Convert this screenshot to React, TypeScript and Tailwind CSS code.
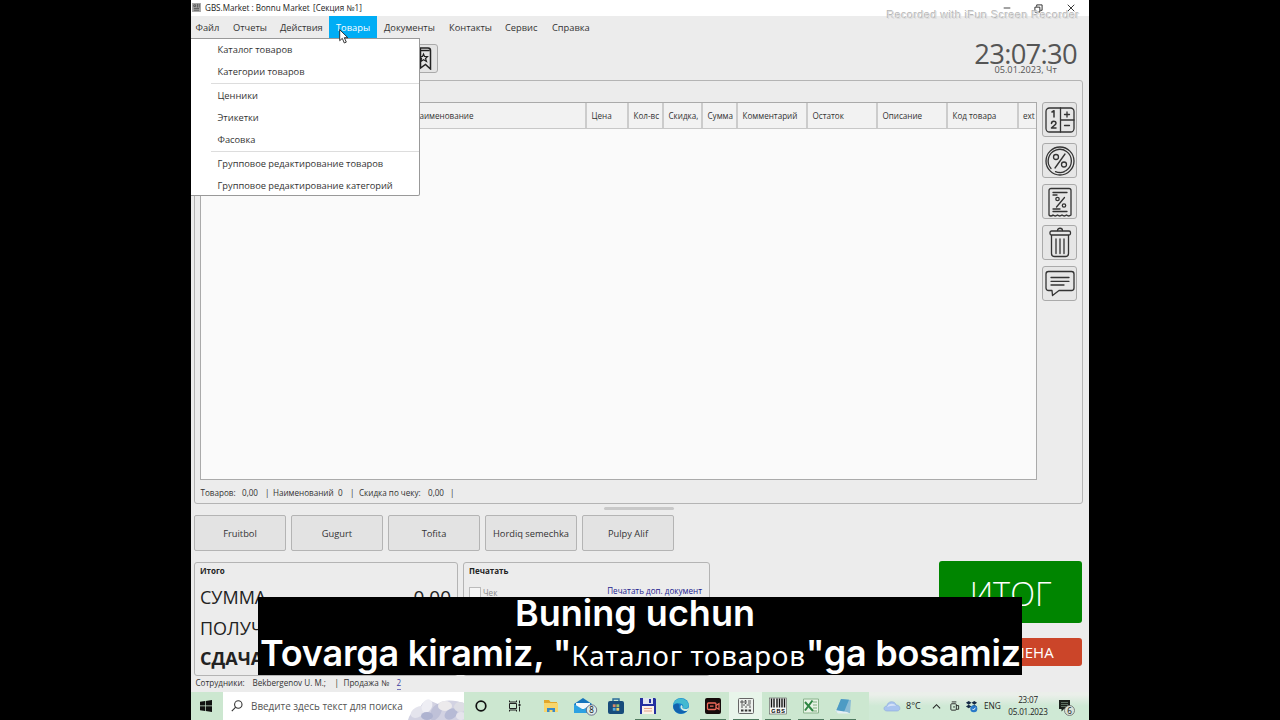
import React from 'react';
import { Minus, X } from 'lucide-react';

const menuItems = [
    { label: 'Файл', box: 'w-[35px] pl-[4.500px]' },
    { label: 'Отчеты', box: 'w-[47px] pl-[7px]' },
    { label: 'Действия', box: 'w-[56px] pl-[7px]' },
    { label: 'Товары', box: 'w-[48px] pl-[7px] bg-[#00adf5] text-white' },
    { label: 'Документы', box: 'w-[65px] pl-[7px]' },
    { label: 'Контакты', box: 'w-[56px] pl-[7px]' },
    { label: 'Сервис', box: 'w-[47px] pl-[7px]' },
    { label: 'Справка', box: 'w-[60px] pl-[7px]' },
];

const dropdownGroups = [
    ['Каталог товаров', 'Категории товаров'],
    ['Ценники', 'Этикетки', 'Фасовка'],
    ['Групповое редактирование товаров', 'Групповое редактирование категорий'],
];

const columns = [
    { label: '', width: 'w-[208px]' },
    { label: 'Наименование', width: 'w-[178px]' },
    { label: 'Цена', width: 'w-[42px]' },
    { label: 'Кол-вс', width: 'w-[35px]' },
    { label: 'Скидка,', width: 'w-[39px]' },
    { label: 'Сумма', width: 'w-[35px]' },
    { label: 'Комментарий', width: 'w-[70px]' },
    { label: 'Остаток', width: 'w-[70px]' },
    { label: 'Описание', width: 'w-[70px]' },
    { label: 'Код товара', width: 'w-[71px]' },
];

const products = ['Fruitbol', 'Gugurt', 'Tofita', 'Hordiq semechka', 'Pulpy Alif'];

const Stroke = ({ children }: { children: React.ReactNode }) => (
    <svg viewBox="0 0 32 32" className="size-8" fill="none" stroke="#333" strokeWidth="1.300" strokeLinecap="round" strokeLinejoin="round">
        {children}
    </svg>
);

const sideIcons = [
    <Stroke key="calc">
        <rect x="2" y="4" width="28" height="24" rx="3.500" />
        <path d="M16.500 4v24M16.500 16H30M20.500 10.500h5M23 8v5M20.500 21.500h5" />
        <path d="M8 8l2-1.300v6.300M7.500 19.500c0-3 4.500-3 4.500-.3 0 1.500-2.500 2.500-4.500 4.800h4.500" strokeWidth="1.500" />
    </Stroke>,
    <Stroke key="percent">
        <circle cx="16" cy="16" r="14" />
        <path d="M7 23.500a11.600 11.600 0 1 1 4.500 3.200M15 27.500a11.600 11.600 0 0 0 5-.600M21 9L11 23" />
        <circle cx="12" cy="12" r="2.500" />
        <circle cx="20" cy="19.500" r="2.500" />
    </Stroke>,
    <Stroke key="receipt">
        <path d="M5 29V4.500c0-1.500 1-2 2-2h18c1.500 0 2 1 2 2V29c-1.500 1.300-3 1.300-4.500 0-1.500 1.300-3 1.300-4.500 0-1.500 1.300-3 1.300-4.500 0-1.500 1.300-3 1.300-4.500 0-1.200 1.300-3 1.300-4 0zM9 6.500h14M9 9h4M9 23h7M9 25.500h14M20.500 11.500l-8 9.500" />
        <circle cx="13.500" cy="13" r="1.700" />
        <circle cx="20" cy="19.500" r="1.700" />
    </Stroke>,
    <Stroke key="trash">
        <path d="M7.500 8.500v18c0 2 1 3 3 3h11c2 0 3-1 3-3v-18M13.500 3.500c0-3 5-3 5 0M12 12v14.500M16 12v14.500M20 12v14.500" />
        <rect x="6" y="4" width="20.500" height="4" rx="1.500" />
    </Stroke>,
    <Stroke key="comment">
        <path d="M4.500 3.500h23c1.500 0 2.500 1 2.500 2.500v14c0 1.500-1 2.500-2.500 2.500H15L8.500 27.500l-.500-5H4.500C3 22.500 2 21.500 2 20V6c0-1.500 1-2.500 2.500-2.500zM7 9.500h18M7 13.300h18M7 17h13" />
    </Stroke>,
];

const GbsIcon = () => (
    <svg viewBox="0 0 16 16" className="size-4">
        <rect x=".5" y=".5" width="15" height="15" rx="1" fill="#eef2ee" stroke="#666" />
        <path d="M3 3h2v2H3zM7 2.500h1v3H7zM10 3h3M10 5h3M3 7h4M8.500 7h4M3 9h2M7 9h2M11 9h2" fill="none" stroke="#444" strokeWidth=".9" />
        <path d="M3 12.500h2.500M6.800 12.500h2.500M10.500 12.500H13" stroke="#333" strokeWidth="2" />
    </svg>
);

const taskIcons = [
    {
        icon: <svg viewBox="0 0 18 18" className="size-[18px]"><circle cx="9" cy="9" r="4.800" fill="none" stroke="#111" strokeWidth="1.700" /></svg>,
    },
    {
        icon: (
            <svg viewBox="0 0 18 18" className="size-[18px] translate-x-0.5" fill="none" stroke="#222">
                <path d="M3.500 3.500v1.500h7v-1.500M3.500 14.500v-1.500h7v1.500M3.500 6.500h7v5h-7zM13.500 3.500v3M13.500 9.500v5" />
                <path d="M13.500 7v2" strokeWidth="2" />
            </svg>
        ),
    },
    {
        offset: true,
        icon: (
            <svg viewBox="0 0 18 18" className="size-[18px]">
                <path d="M2 3h5l1.500 2H15v10H2z" fill="#e2a72b" />
                <path d="M2 6h14v9H2z" fill="#f8d66c" />
                <path d="M5 15v-4h8v4h-2.500v-2h-3v2z" fill="#3989c9" />
            </svg>
        ),
    },
    {
        icon: (
            <svg viewBox="0 0 26 20" className="h-5 w-[26px] translate-x-0.5">
                <path d="M2 8l9-6 9 6v9H2z" fill="#1674bd" />
                <path d="M4 7h14v6H4z" fill="#f3f8fb" />
                <path d="M2 8l9 5.500L20 8v9H2z" fill="#2da2e2" />
                <circle cx="19.500" cy="14" r="5.200" fill="#dcebea" stroke="#557" strokeWidth=".8" />
                <text x="19.500" y="17" textAnchor="middle" fontSize="8" fontFamily="Noto Sans" fill="#222">8</text>
            </svg>
        ),
    },
    {
        icon: (
            <svg viewBox="0 0 18 18" className="size-[18px]">
                <path d="M6 5V2h6v3" fill="none" stroke="#2b6e9a" strokeWidth="1.400" />
                <rect x="1" y="4" width="16" height="13" rx="2" fill="#174c7b" />
                <path d="M5.800 7.300h2.800v2.800H5.800z" fill="#d98a6b" /><path d="M9.400 7.300h2.800v2.800H9.400z" fill="#9cc06d" />
                <path d="M5.800 10.900h2.800v2.800H5.800z" fill="#58aedb" /><path d="M9.400 10.900h2.800v2.800H9.400z" fill="#ecd06c" />
            </svg>
        ),
    },
    {
        active: true,
        icon: (
            <svg viewBox="0 0 18 18" className="size-[18px]">
                <path d="M1 1h15l1 1v15H1z" fill="#2330a0" />
                <path d="M4 1h10v6H4z" fill="#dfe4ef" /><path d="M10 2h2v4h-2z" fill="#2330a0" />
                <path d="M3 9h12v8H3z" fill="#fbf1e7" /><path d="M5 11.500h8M5 14h8" stroke="#e2a28b" />
            </svg>
        ),
    },
    {
        icon: (
            <svg viewBox="0 0 18 18" className="size-[18px]">
                <circle cx="9" cy="9" r="8" fill="#1685cf" />
                <path d="M1.200 8C2.500-.5 14-.5 16.500 7c1 4-3 5.500-6 4.200 2-2.200 0-4.700-2.500-4.700C4.500 6 2 7 1.200 8z" fill="#43b9d0" />
                <path d="M7.500 8C6 12 10 15 15.500 13.500 11 19 1 16.500 1.200 9 3 6 6 5.500 7.500 8z" fill="#1263ae" />
                <path d="M9.500 12.200c-1.500-1.200-1.200-3.500 0-4.200 1.200.8 1.300 2 .8 3 2 1.500 5 1.300 6.700-.5-.3 1.500-.8 2.500-1.700 3.200-2 .6-4.300.2-5.800-1.500z" fill="#d7ede0" />
            </svg>
        ),
    },
    {
        active: true,
        icon: (
            <svg viewBox="0 0 18 18" className="size-[18px]">
                <rect x="1" y="1" width="16" height="16" rx="2" fill="#160b0b" />
                <rect x="3.500" y="6" width="8.500" height="6.500" rx="1" fill="none" stroke="#ee6a5b" strokeWidth="1.300" />
                <path d="M12 8.500l3-2v6l-3-2M6 9.200h3.500" stroke="#ee6a5b" fill="none" strokeWidth="1.200" />
            </svg>
        ),
    },
    { active: true, selected: true, icon: <GbsIcon /> },
    {
        active: true,
        icon: (
            <svg viewBox="0 0 18 18" className="size-[18px]">
                <rect x=".5" y="1" width="17" height="16" fill="#f5f7f5" stroke="#555" strokeWidth=".6" />
                <path d="M2.500 1.500v9M5 1.500v9M8 1.500v9M10.500 1.500v9M13 1.500v9M15.500 1.500v9" stroke="#111" strokeWidth="1.400" />
                <text x="9.500" y="16.300" textAnchor="middle" fontSize="5.500" fontWeight="700" fontFamily="Liberation Sans" letterSpacing=".8">GBS</text>
            </svg>
        ),
    },
    {
        active: true,
        icon: (
            <svg viewBox="0 0 18 18" className="size-[18px]">
                <path d="M1.500 2h15v14h-15z" fill="#e8f3e6" stroke="#8ab38c" />
                <path d="M11 5h4M11 8h4M11 11h4M11 14h4" stroke="#7eae7e" />
                <path d="M3 5l8 9M10.500 3.500L3 13.500" stroke="#2f8543" strokeWidth="2" />
            </svg>
        ),
    },
    {
        active: true,
        icon: (
            <svg viewBox="0 0 18 18" className="size-[18px]">
                <path d="M7 2l10 1-1 13-14-1z" fill="#8bbcd5" />
                <path d="M7 2l8 .8L10 15l-8-1z" fill="#4d9bc4" /><path d="M1 13l12 2 3 1.500H4z" fill="#e4eff3" />
            </svg>
        ),
    },
];

const Header = () => (
    <>
        <div className="flex h-4 items-center justify-between bg-white">
            <div className="flex items-center pl-px text-[8.100px] text-[#222]">
                <svg viewBox="0 0 10 10" className="size-[9px]">
                    <rect width="10" height="10" fill="#aaa" />
                    <path d="M2 2h2v2H2zM6 1v4M8 1v4M2 6h6M2 8h6" stroke="#555" fill="none" />
                </svg>
                <span className="w-[108px] whitespace-nowrap pl-[4px]">GBS.Market : Bonnu Market</span>
                <span className="pl-[4px]">[Секция №1]</span>
            </div>
            <div className="flex items-center pr-[12px] text-[#222]">
                <Minus size={10} strokeWidth={2} />
                <svg viewBox="0 0 10 10" className="ml-[22px] size-[9px]" fill="none" stroke="currentColor">
                    <path d="M1 3.500h5.500V9H1zM3 3V1h6v6H7" />
                </svg>
                <X size={12} strokeWidth={1.800} className="ml-[22px]" />
            </div>
        </div>
        <div className="flex h-[22px] text-[9.3px] leading-[23px] text-[#333]">
            {menuItems.map((item) => (
                <div key={item.label} className={`whitespace-nowrap ${item.box}`}>{item.label}</div>
            ))}
        </div>
        <div className="flex h-[42px] justify-between">
            <div className="ml-[218px] mt-[6px] flex size-[29px] justify-center rounded-[3px] border border-[#aaa] bg-[#e4e4e4] pr-1 pt-px">
                <svg viewBox="0 0 24 24" className="size-6 shrink-0" fill="none" stroke="#222" strokeWidth="1.500">
                    <path d="M3 2h15c2 0 2.500 1 2.500 2.500V23l-5-4.500-5 3.500V4c0-1.500-1-2-2-2M10.500 4.500h9" />
                    <path d="M13.500 8l1 2.500h3l-2 2 1 3-3-1.700-2.700 1.700.7-3-2-2h3z" strokeWidth="1.200" />
                </svg>
            </div>
            <div className="mr-[12px] flex flex-col items-center pt-[1px] text-[#555]">
                <div className="text-[27.4px] leading-[30px] tracking-[-0.7px]">23:07:30</div>
                <div className="-mt-[5px] text-[9.200px] leading-[11px]">05.01.2023, Чт</div>
            </div>
        </div>
    </>
);

const DropdownMenu = () => (
    <div className="absolute left-0 top-[38px] z-10 h-[158px] w-[229px] rounded-br-[2px] border border-l-0 border-[#999] bg-white text-[9.3px] text-[#333]">
        {dropdownGroups.map((group, idx) => (
            <div key={idx}>
                {idx > 0 && <div className="ml-[20px] h-0.5 border-t border-[#ddd]" />}
                {group.map((label) => (
                    <div key={label} className="h-[22px] whitespace-nowrap pl-[26.500px] leading-[22px]">{label}</div>
                ))}
            </div>
        ))}
    </div>
);

const SaleTable = () => (
    <div className="ml-[3px] flex h-[424px] w-[889px] flex-col rounded-[3px] border border-[#b4b4b4]">
        <div className="flex pl-[5px] pt-[21px]">
            <div className="h-[378px] w-[837px] overflow-hidden border border-[#aaa] bg-[#fafafa]">
                <div className="flex h-[26px] border-b border-[#c8c8c8] bg-[#f2f2f2] text-[8.1px] leading-[26px] text-[#333]">
                    {columns.map((col, idx) => (
                        <div key={idx} className={`shrink-0 overflow-hidden whitespace-nowrap border-r-2 border-[#ccc] pl-[4.500px] ${col.width}`}>{col.label}</div>
                    ))}
                    <div className="pl-[4px]">ext</div>
                </div>
            </div>
            <div className="ml-[5px] flex flex-col gap-[6px]">
                {sideIcons.map((icon, idx) => (
                    <div key={idx} className="flex size-[35px] items-center justify-center rounded-[3px] border border-[#aaa] bg-[#e6e6e6]">{icon}</div>
                ))}
            </div>
        </div>
        <div className="flex whitespace-nowrap pl-[5.500px] text-[8.1px] leading-[25px] text-[#333]">
            <span className="w-[41.500px]">Товаров:</span>
            <span className="w-[23px]">0,00</span>
            <span className="w-[8px]">|</span>
            <span className="w-[65px]">Наименований</span>
            <span className="w-[12px]">0</span>
            <span className="w-[9px]">|</span>
            <span className="w-[69px]">Скидка по чеку:</span>
            <span className="w-[22px]">0,00</span>
            <span>|</span>
        </div>
    </div>
);

const Checkout = () => (
    <div className="flex h-[114px] pl-[3px]">
        <div className="w-[264px] rounded-[3px] border border-[#b4b4b4] px-[5px] text-[#222]">
            <div className="h-[17px] text-[8px] font-bold leading-[16px]">Итого</div>
            <div className="flex h-[34px] justify-between leading-[35px]">
                <span className="text-[18px]">СУММА</span>
                <span className="pr-[1px] text-[19px]">0,00</span>
            </div>
            <div className="h-[28px] text-[18px] leading-[28px]">ПОЛУЧЕНО</div>
            <div className="text-[18px] font-bold leading-[33px]">СДАЧА</div>
        </div>
        <div className="ml-[5px] w-[247px] rounded-[3px] border border-[#b4b4b4] px-[5px]">
            <div className="h-[17px] text-[8px] font-bold leading-[16px] text-[#222]">Печатать</div>
            <div className="flex pt-[7px] text-[8.100px] leading-[12px]">
                <span className="size-[12px] border border-[#bbb] bg-[#f5f5f5]" />
                <span className="pl-[2px] text-[#888]">Чек</span>
                <span className="-mt-[2px] ml-auto pr-[2px] leading-[11px] text-[#23238e]">Печатать доп. документ</span>
            </div>
        </div>
        <div className="ml-auto mr-[7px] -mt-px w-[143px] text-center text-white">
            <div className="h-[62px] rounded-[3px] bg-[#008500] text-[32.500px] font-light leading-[65px]">ИТОГ</div>
            <div className="mt-[15px] h-[28px] rounded-[3px] bg-[#cb4529] pl-[24px] text-[15px] leading-[28px]">ОТМЕНА</div>
        </div>
    </div>
);

const Taskbar = () => (
    <div className="flex h-[28px] items-center overflow-hidden bg-[#cce7d0] text-[#222]">
        <div className="flex w-[32px] shrink-0 justify-center pr-[3px]">
            <svg viewBox="0 0 12 12" className="size-3 text-[#111]" fill="currentColor">
                <path d="M0 1.700l5-.7v4.600H0zM5.700.9L12 0v5.600H5.700zM0 6.300h5V11l-5-.7zM5.700 6.300H12V12l-6.300-.9z" />
            </svg>
        </div>
        <div className="flex h-full w-[241px] shrink-0 items-center bg-white">
            <svg viewBox="0 0 12 12" className="ml-[8px] size-3" fill="none" stroke="#333" strokeWidth="1.100">
                <circle cx="7.300" cy="4.500" r="3.700" />
                <path d="M4.700 7.200L.8 11.200" />
            </svg>
            <span className="whitespace-nowrap pl-[8px] text-[9.900px] text-[#555]">Введите здесь текст для поиска</span>
            <svg viewBox="0 0 56 28" className="ml-auto h-7 w-14 shrink-0">
                <path d="M0 28c2-10 12-10 14-16 5-6 11-2 16 0 7-6 19-3 26-1v17z" fill="#d2d2e2" />
                <ellipse cx="10" cy="20" rx="8" ry="5" fill="#e4e4ed" transform="rotate(-30 10 20)" />
                <ellipse cx="19" cy="14" rx="5" ry="7" fill="#eeeef4" transform="rotate(25 19 14)" />
                <ellipse cx="28" cy="20" rx="5" ry="9" fill="#bfc1d8" transform="rotate(28 28 20)" />
                <ellipse cx="37" cy="14" rx="7" ry="5" fill="#eceaec" />
                <ellipse cx="43" cy="22" rx="7" ry="5" fill="#b6bad5" transform="rotate(-35 43 22)" />
                <ellipse cx="52" cy="15" rx="6" ry="5" fill="#dddde4" />
                <ellipse cx="19" cy="24" rx="6" ry="4" fill="#aeb3d0" />
                <ellipse cx="53" cy="24" rx="5" ry="4" fill="#e5e4ec" />
            </svg>
        </div>
        <div className="flex h-full shrink-0">
            {taskIcons.map((item, idx) => (
                <div key={idx} className={`-mr-[0.500px] flex h-full w-[33px] shrink-0 flex-col items-center ${item.selected ? 'bg-[#e8f5ea]' : ''} ${item.offset ? 'ml-[5px]' : ''}`}>
                    <div className="flex h-[27px] items-center">{item.icon}</div>
                    {item.active && <div className="h-px w-[26px] bg-[#4f7a5f]" />}
                </div>
            ))}
        </div>
        <div className="ml-[10px] flex h-full flex-1 items-center bg-linear-to-b from-[#ebefea] from-10% to-[#cfe9d5] to-50% text-[9px]">
            <svg viewBox="0 0 18 14" className="ml-[14px] h-3.5 w-[18px] shrink-0">
                <path d="M4 12C0 12 0 7 4 7c0-5 8-6 9-1 5 0 5 6 1 6z" fill="#a9c4ef" stroke="#8aa9dc" strokeWidth=".6" />
                <path d="M4 8c2-4 7-4 9-1-3-.5-6 0-9 1z" fill="#d5e2f8" />
            </svg>
            <span className="w-[31px] shrink-0 whitespace-nowrap pl-[5px]">8°C</span>
            <svg viewBox="0 0 10 10" className="size-[9px] shrink-0" fill="none" stroke="#222" strokeWidth="1.200"><path d="M1 7l4-4 4 4" /></svg>
            <svg viewBox="0 0 12 12" className="ml-[8px] size-[11px] shrink-0" fill="none" stroke="#222">
                <rect x="2" y="3" width="6" height="7" rx="1" /><path d="M8 5h2.500v4H8M3 1h5M4.500 6.500h2" />
            </svg>
            <svg viewBox="0 0 14 14" className="ml-[5px] size-[13px] shrink-0">
                <path d="M4 1l3 2-3 2-3-2zM10 1l3 2-3 2-3-2zM4 5l3 2-3 2-3-2zM10 5l3 2-3 2-3-2z" fill="#152a45" />
                <circle cx="9.500" cy="9.500" r="3.800" fill="#2878c8" />
                <path d="M8 9.500l1.200 1.300 2-2.500" stroke="#fff" fill="none" />
            </svg>
            <span className="ml-[6px] w-[22px] shrink-0 text-[8.300px]">ENG</span>
            <div className="w-[44px] shrink-0 whitespace-nowrap text-center text-[8.100px] leading-[12.500px] tracking-[-0.200px]">
                <div>23:07</div>
                <div>05.01.2023</div>
            </div>
            <svg viewBox="0 0 18 18" className="ml-[8px] mt-[3px] size-[18px] shrink-0">
                <path d="M1 1h11v9H6l-2.500 2.500V10H1z" fill="#1b211c" />
                <path d="M3 3.500h7M3 5.500h7M3 7.500h5" stroke="#789080" strokeWidth=".7" />
                <circle cx="11.500" cy="11.500" r="5" fill="#d8e3da" stroke="#666" strokeWidth=".8" />
                <text x="11.500" y="14.500" textAnchor="middle" fontSize="8" fontFamily="Noto Sans" fill="#222">6</text>
            </svg>
        </div>
    </div>
);

const Caption = () => (
    <div className="absolute left-[258px] top-[597px] z-20 h-[78px] w-[764px] bg-black font-['Inter',sans-serif] text-[36px] font-semibold text-white">
        <div className="-ml-[10px] h-[35px] whitespace-nowrap text-center leading-[32px]">Buning uchun</div>
        <div className="flex h-[43px] items-baseline whitespace-nowrap pl-[2px] leading-[42px] tracking-[-0.200px]">
            <span>Tovarga kiramiz, "</span>
            <span className="font-['Noto_Sans',sans-serif] text-[28px] font-normal tracking-[0.700px]">Каталог товаров</span>
            <span>"ga bosamiz</span>
        </div>
    </div>
);

const App = () => {
    return (
        <main className="relative h-[720px] w-[1280px] overflow-hidden bg-black font-['Open_Sans','Noto_Sans',sans-serif]">
            <div className="relative ml-[191px] flex h-full w-[898px] flex-col bg-[#ececec]">
                <Header />
                <SaleTable />
                <div className="ml-[413px] mt-[3px] h-[3px] w-[70px] rounded-full bg-[#c8c8c8]" />
                <div className="mt-[5px] flex gap-[5px] pl-[3px]">
                    {products.map((name) => (
                        <div key={name} className="h-[36px] w-[92px] whitespace-nowrap rounded-[2px] border border-[#b4b4b4] bg-[#e3e3e3] text-center text-[9.300px] leading-[36px] text-[#333]">{name}</div>
                    ))}
                </div>
                <div className="h-[11px]" />
                <Checkout />
                <div className="flex h-[16px] whitespace-nowrap pl-[4.500px] text-[8.100px] leading-[14px] text-[#333]">
                    <span className="w-[57px]">Сотрудники:</span>
                    <span className="w-[82px]">Bekbergenov U. M.;</span>
                    <span className="w-[9px]">|</span>
                    <span className="w-[53px]">Продажа №</span>
                    <span className="h-[14px] border-b border-[#7777bb] text-[#3c3ca0]">2</span>
                </div>
                <Taskbar />
                <DropdownMenu />
                <svg viewBox="0 0 10 15" className="absolute left-[148px] top-[29px] z-20 h-[15px] w-[10px]">
                    <path d="M.7.7v11l2.600-2.300 2 4.600 2-.9-2-4.400h3.500z" fill="#fff" stroke="#222" strokeWidth=".9" />
                </svg>
                <div className="absolute left-[696px] top-[8px] z-10 whitespace-nowrap font-['Liberation_Sans',sans-serif] text-[11px] leading-[14px] tracking-[0.35px] text-[#dcdcdc] [text-shadow:-1px_-1px_0_#b4b4b4]">
                    Recorded with iFun Screen Recorder
                </div>
            </div>
            <Caption />
        </main>
    );
};

export default App;
